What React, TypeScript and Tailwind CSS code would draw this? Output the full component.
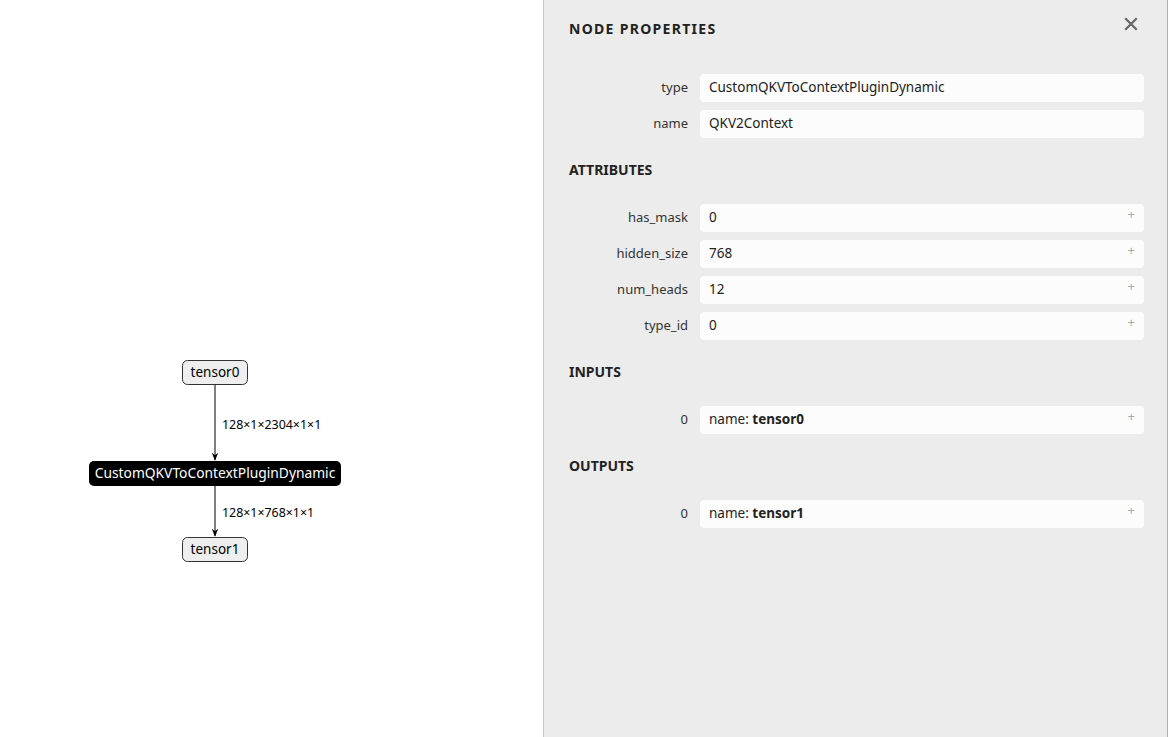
import React from "react";

const font = { fontFamily: '"Noto Sans", "Open Sans", sans-serif' };

type Row = { label: string; value: React.ReactNode; expand?: boolean };

function Section({ title, rows, first }: { title: string; rows: Row[]; first?: boolean }) {
  return (
    <div>
      <div
        className={`h-5 leading-5 font-bold text-[#222] ${
          first ? "mt-px text-[14px] tracking-[1.3px]" : "mt-[22px] text-[14px]"
        }`}
      >
        {title}
      </div>
      <div className={`flex flex-col gap-2 ${first ? "mt-[35px]" : "mt-6"}`}>
        {rows.map((r, i) => (
          <div key={i} className="flex items-start gap-3">
            <div className="w-[119px] shrink-0 h-7 leading-[27px] text-right text-[13px] text-[#333]">{r.label}</div>
            <div className="relative flex-1 h-7 leading-[27px] rounded-[4px] bg-[#fcfcfc] px-[9px] text-[13.5px] text-[#222]">
              {r.value}
              {r.expand && <span className="absolute right-[9px] top-[-3px] text-[13px] text-[#aaa]">+</span>}
            </div>
          </div>
        ))}
      </div>
    </div>
  );
}

function Graph() {
  return (
    <svg width="543" height="737" viewBox="0 0 543 737" className="block" style={font}>
      <defs>
        <marker id="arr" viewBox="0 0 10 10" refX="9" refY="5" markerWidth="8" markerHeight="8" orient="auto">
          <path d="M0 1 L10 5 L0 9 L3 5 Z" fill="#000" />
        </marker>
      </defs>
      <line x1="215" y1="384" x2="215" y2="460" stroke="#000" strokeWidth="1" markerEnd="url(#arr)" />
      <line x1="215" y1="486" x2="215" y2="536" stroke="#000" strokeWidth="1" markerEnd="url(#arr)" />
      <text x="222" y="428.5" fontSize="12.4" fill="#000">128×1×2304×1×1</text>
      <text x="222" y="516.5" fontSize="12.4" fill="#000">128×1×768×1×1</text>

      <rect x="182.5" y="360.5" width="65" height="24" rx="5" fill="#eeeeee" stroke="#333" />
      <text x="215" y="377" fontSize="13.5" textAnchor="middle" fill="#000">tensor0</text>

      <rect x="89" y="461" width="252" height="25" rx="5" fill="#000" />
      <text x="215" y="478" fontSize="13.8" textAnchor="middle" fill="#fff">CustomQKVToContextPluginDynamic</text>

      <rect x="182.5" y="537.5" width="65" height="24" rx="5" fill="#eeeeee" stroke="#333" />
      <text x="215" y="554" fontSize="13.5" textAnchor="middle" fill="#000">tensor1</text>
    </svg>
  );
}

export default function App() {
  return (
    <div className="flex w-[1168px] h-[737px] bg-white overflow-hidden" style={font}>
      <div className="w-[543px] shrink-0">
        <Graph />
      </div>
      <div className="relative flex-1 bg-[#ececec] border-l border-[#c8c8c8] border-r border-r-[#b0b0b0] pl-[25px] pr-[23px] pt-[18px]">
        <button className="absolute right-[29px] top-[17px] w-[14px] h-[14px] text-[#666]">
          <svg viewBox="0 0 14 14" width="14" height="14">
            <path d="M2 2 L12 12 M12 2 L2 12" stroke="currentColor" strokeWidth="2.2" strokeLinecap="square" />
          </svg>
        </button>
        <Section
          first
          title="NODE PROPERTIES"
          rows={[
            { label: "type", value: "CustomQKVToContextPluginDynamic" },
            { label: "name", value: "QKV2Context" },
          ]}
        />
        <Section
          title="ATTRIBUTES"
          rows={[
            { label: "has_mask", value: "0", expand: true },
            { label: "hidden_size", value: "768", expand: true },
            { label: "num_heads", value: "12", expand: true },
            { label: "type_id", value: "0", expand: true },
          ]}
        />
        <Section
          title="INPUTS"
          rows={[{ label: "0", value: <>name: <b>tensor0</b></>, expand: true }]}
        />
        <Section
          title="OUTPUTS"
          rows={[{ label: "0", value: <>name: <b>tensor1</b></>, expand: true }]}
        />
      </div>
    </div>
  );
}
